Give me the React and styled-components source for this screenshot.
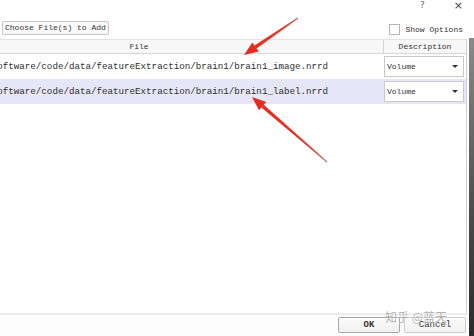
import React from "react";
import styled, { createGlobalStyle } from "styled-components";

const Global = createGlobalStyle`
  html, body, #root { margin: 0; padding: 0; width: 474px; height: 336px; overflow: hidden; background: #ffffff; }
  body { font-family: "Liberation Mono", "DejaVu Sans Mono", monospace; color: #333; }
  * { box-sizing: border-box; }
`;

const Window = styled.div`
  position: relative;
  display: flex;
  width: 474px;
  height: 336px;
  background: #fff;
`;

const Main = styled.div`
  flex: 0 0 467px;
  display: flex;
  flex-direction: column;
  overflow: hidden;
`;

const EdgeStrip = styled.div`
  flex: 0 0 5px;
  margin-left: 2px;
  margin-top: 38px;
  background: linear-gradient(#8a8a8a, #4a4a4a 60%, #2a2a2a);
`;

const TitleBar = styled.div`
  height: 19px;
  display: flex;
  justify-content: flex-end;
  align-items: flex-start;
  padding: 0 4px 0 0;
  gap: 29px;
  font-family: "DejaVu Sans", sans-serif;
  color: #555;
  line-height: 11px;
`;

const TitleGlyph = styled.span`
  display: block;
  font-size: ${(p) => p.$size || 9}px;
  color: ${(p) => p.$color || "#666"};
`;

const Toolbar = styled.div`
  height: 20px;
  display: flex;
  justify-content: space-between;
  align-items: flex-start;
  padding: 2px 4px 0 2px;
`;

const AddButton = styled.button`
  height: 14px;
  padding: 0 2px;
  border: 1px solid #c4c4c4;
  border-radius: 2px;
  background: #fafafa;
  font-family: "Liberation Mono", monospace;
  font-size: 8px;
  line-height: 12px;
  color: #333;
`;

const CheckLabel = styled.label`
  display: flex;
  align-items: center;
  gap: 5px;
  margin-top: 3px;
  font-size: 8px;
  color: #333;
`;

const CheckBox = styled.span`
  width: 11px;
  height: 11px;
  border: 1px solid #b5b5b5;
  background: #fff;
`;

const TableFrame = styled.div`
  flex: 1;
  border-top: 1px solid #e2e2e2;
  border-right: 1px solid #cfcfcf;
  border-bottom: 2px solid #ececec;
  overflow: hidden;
`;

const Grid = styled.div`
  margin-left: -105px;
  display: grid;
  grid-template-columns: 1fr 83px;
`;

const HeaderCell = styled.div`
  height: 14px;
  background: #f7f7f7;
  border-bottom: 1px solid #d6d6d6;
  border-left: ${(p) => (p.$divider ? "1px solid #d6d6d6" : "none")};
  text-align: center;
  font-size: 8px;
  line-height: 13px;
  color: #333;
`;

const PathCell = styled.div`
  height: 25px;
  background: ${(p) => (p.$selected ? "#e6e6f6" : "#fff")};
  display: flex;
  align-items: center;
  padding-left: 3px;
  white-space: nowrap;
  overflow: hidden;
  font-size: 9.2px;
  color: #2e2e2e;
`;

const DescCell = styled.div`
  height: 25px;
  background: ${(p) => (p.$selected ? "#e6e6f6" : "#fff")};
  display: flex;
  align-items: center;
  padding: 0 2px 0 1px;
`;

const Combo = styled.div`
  flex: 1;
  height: 21px;
  display: flex;
  align-items: center;
  justify-content: space-between;
  padding: 0 5px 0 2px;
  background: #fff;
  border: 1px solid #c9c9c9;
  font-size: 8px;
  color: #333;
`;

const ComboArrow = styled.span`
  width: 0;
  height: 0;
  border-left: 3px solid transparent;
  border-right: 3px solid transparent;
  border-top: 3px solid #333;
`;

const Footer = styled.div`
  height: 21px;
  display: flex;
  justify-content: flex-end;
  align-items: flex-start;
  gap: 4px;
  padding: 2px 1px 0 0;
  background: #fdfdfd;
`;

const DialogButton = styled.button`
  width: 62px;
  height: 16px;
  padding: 0;
  border: 1px solid ${(p) => (p.$default ? "#a8a8a8" : "#cdcdcd")};
  border-radius: 2px;
  background: linear-gradient(#fcfcfc, #f0f0f0);
  font-family: "Liberation Mono", monospace;
  font-size: 9px;
  font-weight: ${(p) => (p.$default ? "bold" : "normal")};
  color: #333;
`;

const Watermark = styled.div`
  position: absolute;
  left: 385px;
  top: 309px;
  font-family: "Noto Sans CJK SC", sans-serif;
  font-size: 12px;
  line-height: 16px;
  color: rgba(110, 110, 110, 0.55);
  text-shadow: 0 0 1px #fff;
  white-space: nowrap;
  pointer-events: none;
`;

const Overlay = styled.svg`
  position: absolute;
  left: 0;
  top: 0;
  width: 474px;
  height: 336px;
  pointer-events: none;
`;

const rows = [
  { path: "C:/Users/lantian/Software/code/data/featureExtraction/brain1/brain1_image.nrrd", selected: false },
  { path: "C:/Users/lantian/Software/code/data/featureExtraction/brain1/brain1_label.nrrd", selected: true },
];

function Arrow({ tail, tip, id }) {
  const dx = tip[0] - tail[0];
  const dy = tip[1] - tail[1];
  const len = Math.hypot(dx, dy);
  const u = [dx / len, dy / len];
  const n = [u[1], -u[0]];
  const headLen = 14;
  const b = [tip[0] - headLen * u[0], tip[1] - headLen * u[1]];
  const p = (pt) => `${pt[0].toFixed(1)},${pt[1].toFixed(1)}`;
  const shaft = [
    [tail[0] + 0.5 * n[0], tail[1] + 0.5 * n[1]],
    [b[0] + 1.8 * n[0], b[1] + 1.8 * n[1]],
    [b[0] - 1.8 * n[0], b[1] - 1.8 * n[1]],
    [tail[0] - 0.5 * n[0], tail[1] - 0.5 * n[1]],
  ];
  const head = [
    tip,
    [b[0] + 5.5 * n[0], b[1] + 5.5 * n[1]],
    [b[0] - 5.5 * n[0], b[1] - 5.5 * n[1]],
  ];
  return (
    <g>
      <defs>
        <linearGradient id={id} gradientUnits="userSpaceOnUse" x1={tail[0]} y1={tail[1]} x2={tip[0]} y2={tip[1]}>
          <stop offset="0" stopColor="#b07060" />
          <stop offset="0.25" stopColor="#e03a2c" />
          <stop offset="1" stopColor="#e8291f" />
        </linearGradient>
      </defs>
      <polygon points={shaft.map(p).join(" ")} fill={`url(#${id})`} />
      <polygon points={head.map(p).join(" ")} fill="#e8291f" />
    </g>
  );
}

export default function App() {
  return (
    <>
      <Global />
      <Window>
        <Main>
          <TitleBar>
            <TitleGlyph>?</TitleGlyph>
            <TitleGlyph $size={11} $color="#444">×</TitleGlyph>
          </TitleBar>
          <Toolbar>
            <AddButton>Choose File(s) to Add</AddButton>
            <CheckLabel>
              <CheckBox />
              Show Options
            </CheckLabel>
          </Toolbar>
          <TableFrame>
            <Grid>
              <HeaderCell>File</HeaderCell>
              <HeaderCell $divider>Description</HeaderCell>
              {rows.map((r) => (
                <React.Fragment key={r.path}>
                  <PathCell $selected={r.selected}>{r.path}</PathCell>
                  <DescCell $selected={r.selected}>
                    <Combo>
                      Volume
                      <ComboArrow />
                    </Combo>
                  </DescCell>
                </React.Fragment>
              ))}
            </Grid>
          </TableFrame>
          <Footer>
            <DialogButton $default>OK</DialogButton>
            <DialogButton>Cancel</DialogButton>
          </Footer>
        </Main>
        <EdgeStrip />
        <Watermark>知乎 @蓝天</Watermark>
        <Overlay viewBox="0 0 474 336">
          <Arrow id="a1" tail={[298, 18]} tip={[244, 55]} />
          <Arrow id="a2" tail={[327, 162]} tip={[252, 97]} />
        </Overlay>
      </Window>
    </>
  );
}
